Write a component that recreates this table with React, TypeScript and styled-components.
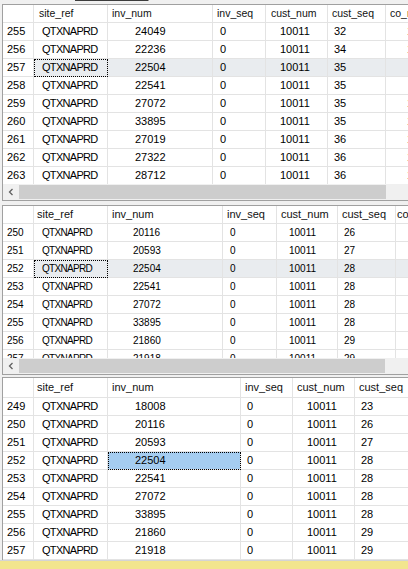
import React from "react";
import styled, { createGlobalStyle } from "styled-components";

const Global = createGlobalStyle`
  html, body { margin: 0; padding: 0; background: #f0f0f0; }
  body { font-family: "Liberation Sans", Arial, sans-serif; color: #000; }
`;

const Screen = styled.div`
  width: 408px;
  height: 569px;
  overflow: hidden;
  display: flex;
  flex-direction: column;
  background: #f0f0f0;
`;

const TopStrip = styled.div`
  height: 4px;
  flex: none;
  display: flex;
  background: #f0f0f0;
`;

const TabEdge = styled.div`
  margin-left: 75px;
  width: 73px;
  height: 1px;
  background: #3c3c3c;
  border-right: 1px solid #9a9a9a;
`;

const Panel = styled.section<{ $bottom?: boolean }>`
  flex: none;
  margin-left: 2px;
  border-left: 1px solid #a0a0a0;
  border-top: 1px solid #a0a0a0;
  border-bottom: ${(p) => (p.$bottom ? "1px solid #a0a0a0" : "none")};
  background: #fff;
  display: flex;
  flex-direction: column;
  overflow: hidden;
`;

const Gap = styled.div<{ $h: number }>`
  flex: none;
  height: ${(p) => p.$h}px;
  background: #f0f0f0;
`;

const GridRow = styled.div<{ $cols: string; $h: number }>`
  flex: none;
  display: grid;
  grid-template-columns: ${(p) => p.$cols};
  height: ${(p) => p.$h}px;
`;

const Body = styled.div<{ $h: number }>`
  flex: none;
  height: ${(p) => p.$h}px;
  overflow: hidden;
  display: flex;
  flex-direction: column;
`;

const HeadCell = styled.div<{ $indent: number; $size: number; $h: number }>`
  box-sizing: border-box;
  border-right: 1px solid #e3e3e3;
  border-bottom: 1px solid #e3e3e3;
  padding-left: ${(p) => p.$indent}px;
  font-size: ${(p) => p.$size}px;
  line-height: ${(p) => p.$h - 1}px;
  white-space: nowrap;
  overflow: hidden;
  color: #111;
`;

const Cell = styled.div<{
  $indent: number;
  $size: number;
  $h: number;
  $tight?: boolean;
  $rowSel?: boolean;
  $focus?: boolean;
  $active?: boolean;
}>`
  box-sizing: border-box;
  border-right: 1px solid #e3e3e3;
  border-bottom: 1px solid #e3e3e3;
  padding-left: ${(p) => p.$indent}px;
  font-size: ${(p) => p.$size}px;
  line-height: ${(p) => p.$h}px;
  letter-spacing: ${(p) => (p.$tight ? "-0.7px" : "0")};
  white-space: nowrap;
  overflow: hidden;
  color: #000;
  background: ${(p) => (p.$active ? "#a5cdf0" : p.$rowSel ? "#e9ecef" : "#fff")};
  outline: ${(p) => (p.$focus ? "1px dotted #000" : "none")};
  outline-offset: -1px;
`;

const HScroll = styled.div`
  flex: none;
  height: 16px;
  display: flex;
  background: #f0f0f0;
`;

const ArrowBtn = styled.div`
  width: 16px;
  flex: none;
  display: flex;
  align-items: center;
  justify-content: center;
`;

const Track = styled.div`
  flex: 1;
  display: flex;
  align-items: center;
`;

const Thumb = styled.div<{ $w: number }>`
  width: ${(p) => p.$w}px;
  height: 14px;
  background: #cdcdcd;
`;

const StatusLine = styled.div`
  flex: none;
  height: 1px;
  background: #d4d4d4;
`;

const StatusBar = styled.div`
  flex: 1;
  background: #f2e58e;
`;

type PanelSpec = {
  widths: number[];
  headers: string[];
  headIndent: number[];
  dataIndent: number[];
  headSize: number;
  dataSize: number;
  headH: number;
  bodyH: number;
  rows: string[][];
  selRow?: number;
  focusCol?: number;
  activeCell?: boolean;
  scroll?: number;
  bottom?: boolean;
};

const mk = (n: string, inv: string, cust: string, co = "") => [
  n,
  "QTXNAPRD",
  inv,
  "0",
  "10011",
  cust,
  co,
];

const panels: PanelSpec[] = [
  {
    widths: [31, 74, 105, 53, 62, 58, 80],
    headers: ["", "site_ref", "inv_num", "inv_seq", "cust_num", "cust_seq", "co_num"],
    headIndent: [0, 5, 4, 4, 5, 4, 4],
    dataIndent: [4, 8, 27, 7, 14, 6, 21],
    headSize: 10.5,
    dataSize: 11,
    headH: 18,
    bodyH: 161,
    rows: [
      mk("255", "24049", "32", "1"),
      mk("256", "22236", "34", "1"),
      mk("257", "22504", "35"),
      mk("258", "22541", "35"),
      mk("259", "27072", "35", "1"),
      mk("260", "33895", "35", "1"),
      mk("261", "27019", "36", "1"),
      mk("262", "27322", "36", "1"),
      mk("263", "28712", "36", "1"),
    ],
    selRow: 2,
    focusCol: 1,
    scroll: 367,
    bottom: true,
  },
  {
    widths: [31, 74, 115, 54, 61, 58, 80],
    headers: ["", "site_ref", "inv_num", "inv_seq", "cust_num", "cust_seq", "co_num"],
    headIndent: [0, 3, 4, 4, 4, 4, 1],
    dataIndent: [4, 8, 25, 7, 12, 6, 8],
    headSize: 11,
    dataSize: 10,
    headH: 18,
    bodyH: 134,
    rows: [
      mk("250", "20116", "26"),
      mk("251", "20593", "27"),
      mk("252", "22504", "28"),
      mk("253", "22541", "28"),
      mk("254", "27072", "28"),
      mk("255", "33895", "28"),
      mk("256", "21860", "29"),
      mk("257", "21918", "29"),
    ],
    selRow: 2,
    focusCol: 1,
    scroll: 366,
    bottom: true,
  },
  {
    widths: [31, 74, 133, 52, 62, 80],
    headers: ["", "site_ref", "inv_num", "inv_seq", "cust_num", "cust_seq"],
    headIndent: [0, 3, 4, 4, 4, 4],
    dataIndent: [4, 8, 27, 6, 14, 6],
    headSize: 11,
    dataSize: 11,
    headH: 20,
    bodyH: 162,
    rows: [
      mk("249", "18008", "23").slice(0, 6),
      mk("250", "20116", "26").slice(0, 6),
      mk("251", "20593", "27").slice(0, 6),
      mk("252", "22504", "28").slice(0, 6),
      mk("253", "22541", "28").slice(0, 6),
      mk("254", "27072", "28").slice(0, 6),
      mk("255", "33895", "28").slice(0, 6),
      mk("256", "21860", "29").slice(0, 6),
      mk("257", "21918", "29").slice(0, 6),
    ],
    selRow: 3,
    focusCol: 2,
    activeCell: true,
  },
];

const ROW_H = 18;

const LeftArrow = () => (
  <svg width="8" height="8" viewBox="0 0 8 8">
    <path d="M5.5 1 L2.5 4 L5.5 7" fill="none" stroke="#606060" strokeWidth="1.3" />
  </svg>
);

const ResultGrid = ({ spec }: { spec: PanelSpec }) => {
  const cols = spec.widths.map((w) => `${w}px`).join(" ");
  return (
    <Panel $bottom={spec.bottom}>
      <GridRow $cols={cols} $h={spec.headH}>
        {spec.headers.map((h, i) => (
          <HeadCell key={i} $indent={spec.headIndent[i]} $size={spec.headSize} $h={spec.headH}>
            {h}
          </HeadCell>
        ))}
      </GridRow>
      <Body $h={spec.bodyH}>
        {spec.rows.map((r, ri) => (
          <GridRow key={ri} $cols={cols} $h={ROW_H}>
            {r.map((v, ci) => {
              const isSelRow = ri === spec.selRow;
              const isFocus = isSelRow && ci === spec.focusCol;
              return (
                <Cell
                  key={ci}
                  $indent={spec.dataIndent[ci]}
                  $size={spec.dataSize}
                  $h={ROW_H - 1}
                  $tight={ci === 1}
                  $rowSel={isSelRow && !spec.activeCell && ci > 0}
                  $focus={isFocus}
                  $active={isFocus && spec.activeCell}
                >
                  {v}
                </Cell>
              );
            })}
          </GridRow>
        ))}
      </Body>
      {spec.scroll ? (
        <HScroll>
          <ArrowBtn>
            <LeftArrow />
          </ArrowBtn>
          <Track>
            <Thumb $w={spec.scroll} />
          </Track>
        </HScroll>
      ) : null}
    </Panel>
  );
};

export default function App() {
  return (
    <>
      <Global />
      <Screen>
        <TopStrip>
          <TabEdge />
        </TopStrip>
        <ResultGrid spec={panels[0]} />
        <Gap $h={4} />
        <ResultGrid spec={panels[1]} />
        <Gap $h={2} />
        <ResultGrid spec={panels[2]} />
        <StatusLine />
        <StatusBar />
      </Screen>
    </>
  );
}
